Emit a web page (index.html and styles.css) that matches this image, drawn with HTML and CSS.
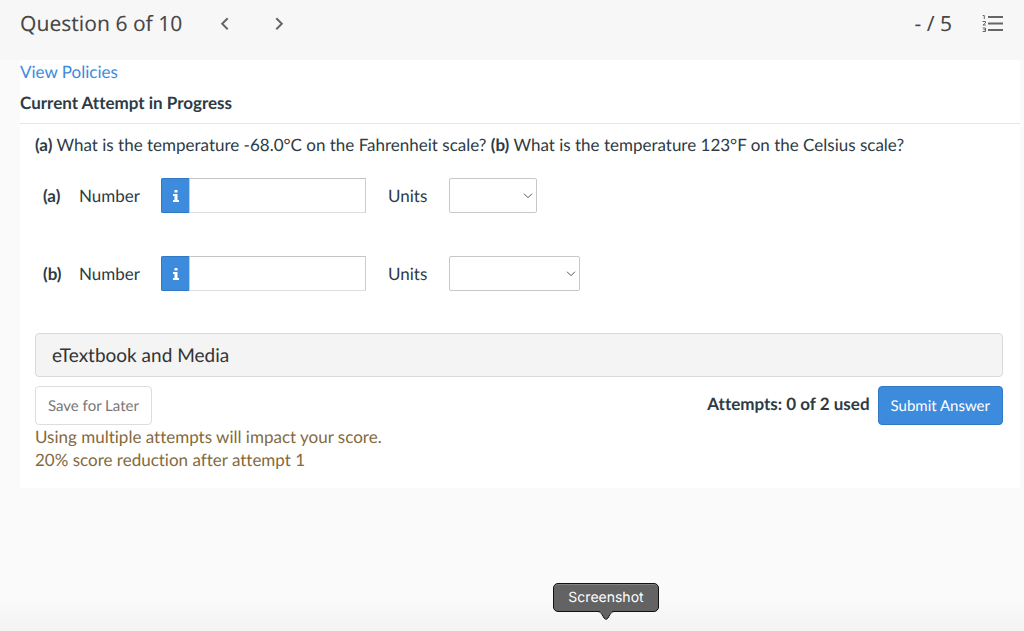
FILE: index.html
```html
<!DOCTYPE html>
<html lang="en">
<head>
<meta charset="utf-8">
<meta name="viewport" content="width=device-width, initial-scale=1">
<title>Question 6 of 10</title>
<link rel="stylesheet" href="styles.css">
</head>
<body>
<header class="topbar">
  <h1 class="topbar-title">Question 6 of 10</h1>
  <nav class="topbar-nav">
    <button class="icon-button" type="button" aria-label="Previous question">
      <svg width="10" height="14" viewBox="0 0 10 14" fill="none" stroke="currentColor" stroke-width="2"><path d="M7.700 1.200 2.200 6.700l5.500 5.500"/></svg>
    </button>
    <button class="icon-button" type="button" aria-label="Next question">
      <svg width="10" height="14" viewBox="0 0 10 14" fill="none" stroke="currentColor" stroke-width="2"><path d="m2.300 1.200 5.500 5.500-5.500 5.500"/></svg>
    </button>
  </nav>
  <span class="topbar-score">- / 5</span>
  <button class="icon-button" type="button" aria-label="Question list">
    <svg width="22" height="20" viewBox="0 0 22 20" fill="none" stroke="currentColor"><path stroke-width="2" d="M6 3h15M6 9.500h15M6 16h15"/><path stroke-width="1" d="M.7 1.500h1.600V5M.5 7.500h3V9L1 11h2.800M.7 14h2.800v3.500H.7M1.500 15.700h2"/></svg>
  </button>
</header>
<main class="panel">
  <a class="policies" href="#">View Policies</a>
  <h2 class="status">Current Attempt in Progress</h2>
  <form class="question">
    <p class="prompt"><b>(a)</b> What is the temperature -68.0°C on the Fahrenheit scale? <b>(b)</b> What is the temperature 123°F on the Celsius scale?</p>
    <div class="answer">
      <b class="part">(a)</b>
      <label class="number-label" for="number-a">Number</label>
      <div class="input-group">
        <button class="info" type="button" aria-label="Number format help"><svg width="6" height="12" viewBox="0 0 6 12" fill="currentColor"><path d="M1.500 0h3v2.500h-3zM0 4h4.500v6H6v2H0v-2h1.500V6H0z"/></svg></button>
        <input class="number" id="number-a" type="text">
      </div>
      <label class="units-label" for="units-a">Units</label>
      <select class="units units-short" id="units-a"><option></option></select>
    </div>
    <div class="answer">
      <b class="part">(b)</b>
      <label class="number-label" for="number-b">Number</label>
      <div class="input-group">
        <button class="info" type="button" aria-label="Number format help"><svg width="6" height="12" viewBox="0 0 6 12" fill="currentColor"><path d="M1.500 0h3v2.500h-3zM0 4h4.500v6H6v2H0v-2h1.500V6H0z"/></svg></button>
        <input class="number" id="number-b" type="text">
      </div>
      <label class="units-label" for="units-b">Units</label>
      <select class="units units-long" id="units-b"><option></option></select>
    </div>
    <button class="media" type="button">eTextbook and Media</button>
    <div class="actions">
      <button class="button button-save" type="button">Save for Later</button>
      <span class="attempts">Attempts: 0 of 2 used</span>
      <button class="button button-submit" type="submit">Submit Answer</button>
    </div>
    <p class="warning">Using multiple attempts will impact your score.<br>20% score reduction after attempt 1</p>
  </form>
</main>
<div class="tooltip" role="tooltip">Screenshot<svg class="tooltip-tip" width="18" height="10" viewBox="0 0 18 10"><path fill="#636363" d="M0 0h18v1c-3 0-4 1-7 7q-2 2-4 0C4 2 3 1 0 1z"/><path fill="none" stroke="#111" d="M0 1.500c3 0 4 1 7 6.500q2 3 4 0c3-5.500 4-6.500 7-6.500"/></svg></div>
</body>
</html>
```
FILE: styles.css
```css
* { box-sizing: border-box; }

body {
  min-height: 100vh;
  margin: 0;
  background: linear-gradient(#fafafa calc(100% - 32px), #f3f3f3);
  color: #2d3b45;
  font: 17px/24px Lato, sans-serif;
  font-variant-ligatures: none;
  text-rendering: geometricPrecision;
}

button, input, select { margin: 0; font: inherit; text-rendering: inherit; }
button { cursor: pointer; }

.topbar {
  display: flex;
  align-items: center;
  height: 60px;
  padding: 0 20px 12px;
  background: #f7f7f7;
  color: #484848;
  font: 21px/28px "Noto Sans", sans-serif;
}
.topbar-title { margin: 0; font: inherit; }
.topbar-nav {
  display: flex;
  gap: 44px;
  margin-left: 38px;
}
.topbar-score { margin: 0 30px 0 auto; }
.icon-button {
  display: flex;
  padding: 0;
  border: 0;
  background: none;
  color: #666;
}

.panel {
  margin: 0 4px 0 20px;
  background: #fff;
}
.policies {
  display: block;
  color: #3d8bdc;
  text-decoration: none;
}
.status {
  margin: 0;
  padding: 7px 0 9px;
  border-bottom: 1px solid #e7e7e7;
  font-size: 17px;
  line-height: 23px;
}
.question { padding: 9px 17px 17px 15px; }
.prompt { margin: 0 0 21px; }

.answer {
  display: flex;
  align-items: center;
  height: 35px;
  margin-bottom: 43px;
  padding-left: 8px;
}
.part { width: 36px; }
.number-label { width: 82px; }
.input-group {
  display: flex;
  width: 205px;
  height: 35px;
}
.info {
  display: flex;
  align-items: center;
  justify-content: center;
  width: 28px;
  padding: 0;
  border: 1px solid #3279c4;
  border-right: 0;
  border-radius: 2px 0 0 2px;
  background: #3d8bdc;
  color: #fff;
}
.number {
  flex: 1;
  min-width: 0;
  padding: 0 8px;
  border: 1px solid #c7cdd1;
  border-color: #c4c4c4 #ccc #ddd;
  background: #fff;
}
.units-label { width: 61px; margin-left: 22px; }
.units {
  height: 35px;
  padding: 0 24px 0 8px;
  border: 1px solid #c8c8c8;
  border-radius: 2px;
  background: #fff url("data:image/svg+xml,%3Csvg xmlns='http://www.w3.org/2000/svg' width='10' height='6' fill='none' stroke='%23555'%3E%3Cpath d='m1 .7 4 4 4-4'/%3E%3C/svg%3E") no-repeat right 3px center;
  appearance: none;
}
.units-short { width: 88px; }
.units-long { width: 131px; }

.media {
  display: block;
  width: 100%;
  margin-top: -1px;
  padding: 9px 16px 7px;
  border: 1px solid #d9d9d9;
  border-radius: 4px;
  background: #f4f4f4;
  color: #333;
  font-size: 19px;
  line-height: 26px;
  text-align: left;
}
.actions {
  display: flex;
  align-items: center;
  margin-top: 9px;
}
.button {
  padding: 9px 12px 7px;
  border: 1px solid #ddd;
  border-radius: 4px;
  font-size: 15px;
  line-height: 21px;
}
.button-save { background: #fff; color: #777; }
.button-submit {
  border-color: #3279c4;
  background: #3d8bdc;
  color: #fff;
}
.attempts {
  margin: 0 8px 4px auto;
  font-weight: 700;
}
.warning {
  margin: 0;
  color: #836a3d;
  line-height: 23px;
}

.tooltip {
  position: absolute;
  bottom: 19px;
  left: 553px;
  width: 106px;
  border: 1px solid #111;
  border-radius: 5px;
  background: #636363;
  box-shadow: inset 0 1px #828282;
  color: #fff;
  font: 14px/27px Inter, sans-serif;
  text-align: center;
}
.tooltip-tip {
  position: absolute;
  top: 100%;
  left: 43px;
  margin-top: -1px;
}
```
